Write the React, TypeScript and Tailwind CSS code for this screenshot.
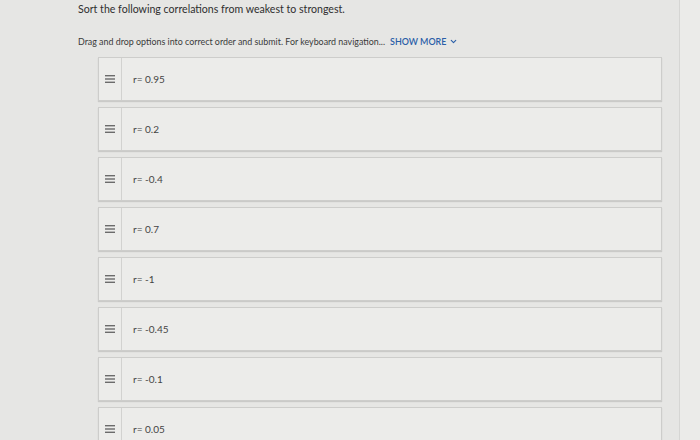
import { ChevronDown } from "lucide-react";

const OPTIONS = ["0.95", "0.2", "-0.4", "0.7", "-1", "-0.45", "-0.1", "0.05"];

function DragHandle() {
  return (
    <svg width="10" height="8" viewBox="0 0 10 8" className="text-[#6b6b6b]">
      <rect x="0" y="0" width="10" height="1.4" fill="currentColor" />
      <rect x="0" y="3.3" width="10" height="1.4" fill="currentColor" />
      <rect x="0" y="6.6" width="10" height="1.4" fill="currentColor" />
    </svg>
  );
}

function SortRow({ value }: { value: string }) {
  return (
    <div className="flex h-[44px] border border-[#cdcdcb] bg-[#ececea] shadow-[0_1px_1px_rgba(0,0,0,0.12)]">
      <div className="flex w-[23px] items-center justify-center border-r border-[#d2d2d0]">
        <DragHandle />
      </div>
      <div className="flex items-center pl-[11px] text-[10px] text-[#444444]">
        r= {value}
      </div>
    </div>
  );
}

export default function App() {
  return (
    <div className="h-[440px] w-[700px] overflow-hidden bg-[#e6e6e4] font-['Lato',sans-serif]">
      <div className="flex h-full">
        <div className="w-[680px] border-r border-[#d6d6d4] pl-[78px] pt-[1px]">
          <h1 className="text-[10.6px] leading-[16px] text-[#2f2f2f]">
            Sort the following correlations from weakest to strongest.
          </h1>
          <p className="mt-[18px] flex items-center text-[8.9px] leading-[13px] text-[#3a3a3a]">
            Drag and drop options into correct order and submit. For keyboard navigation...
            <span className="ml-[5px] font-semibold text-[#2a5fa8]">SHOW MORE</span>
            <ChevronDown className="ml-[3px] h-[9px] w-[9px] text-[#2a5fa8]" strokeWidth={3} />
          </p>
          <div className="ml-[20px] mr-[17px] mt-[9px] flex flex-col gap-[6px]">
            {OPTIONS.map((v) => (
              <SortRow key={v} value={v} />
            ))}
          </div>
        </div>
        <div className="flex-1 bg-[#ebebe9]" />
      </div>
    </div>
  );
}
